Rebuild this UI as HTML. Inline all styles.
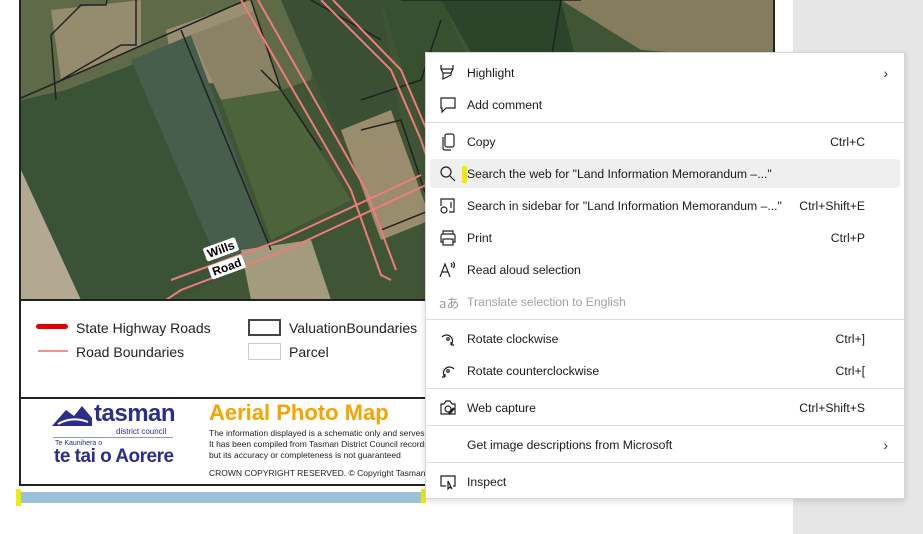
<!DOCTYPE html>
<html><head><meta charset="utf-8"><style>
*{margin:0;padding:0;box-sizing:border-box}
body{width:923px;height:534px;overflow:hidden;background:#fff;font-family:"Liberation Sans",Arial,sans-serif;position:relative}
.gray{position:absolute;left:793px;top:0;width:130px;height:534px;background:#e6e6e6}
.map{position:absolute;left:19px;top:0;width:756px;height:486px;border:2px solid #222;border-top:none;background:#fff;overflow:hidden}
.leg{position:absolute;font-size:14px;color:#222}
.menu{position:absolute;left:425px;top:52px;width:480px;height:447px;background:#fff;border:1px solid #d6d6d6;box-shadow:0 2px 6px rgba(0,0,0,.15);font-size:12.2px;color:#1a1a1a}
.it{position:absolute;left:0;width:478px;height:30px}
.it .t{position:absolute;left:41px;top:8px}
.it .k{position:absolute;right:39px;top:8px}
.it svg{position:absolute;left:13px;top:6px}
.sep{position:absolute;left:0;width:478px;height:1px;background:#dcdcdc}
.hl{position:absolute;left:4px;top:106px;width:470px;height:29px;background:#efefef;border-radius:4px}
.ch{position:absolute;right:16px;top:7px;font-size:14px;color:#333}
</style></head><body>
<div class="gray"></div>
<div class="map">
<svg width="756" height="300" viewBox="0 0 756 300" style="position:absolute;left:0;top:0">
<rect width="756" height="300" fill="#3f5535"/>
<polygon points="0,0 230,0 160,70 40,100 0,100" fill="#5e6a48"/>
<polygon points="30,10 120,0 120,45 40,80" fill="#958c6e"/>
<polygon points="145,30 230,0 250,80 155,85" fill="#9a8f72"/>
<polygon points="0,150 0,300 90,300 70,230 20,160" fill="#b3a891"/>
<polygon points="45,90 150,50 250,250 160,300 60,300 0,170 0,100" fill="#3a5236"/>
<polygon points="110,60 170,35 250,250 200,270" fill="#475e4c"/>
<polygon points="170,35 235,10 260,90 200,100" fill="#8a8265"/>
<polygon points="200,100 260,90 330,200 250,240" fill="#4d6339"/>
<polygon points="230,0 300,0 290,80 260,90" fill="#5f6a48"/>
<polygon points="260,0 360,0 380,120 320,140" fill="#3a4f33"/>
<polygon points="320,130 370,110 410,220 360,240" fill="#9a8d6e"/>
<polygon points="360,0 420,0 500,170 420,190" fill="#37502f"/>
<polygon points="420,0 540,0 560,80 500,140" fill="#2c452a"/>
<polygon points="540,0 756,0 756,60 620,50" fill="#857c5d"/>
<polygon points="400,180 440,170 480,260 420,280" fill="#4d6339"/>
<polygon points="220,250 290,240 310,300 230,300" fill="#a39b7d"/>
<g fill="none" stroke="#222" stroke-width="1.5">
<path d="M0,98 L225,0 M160,30 L250,250 M35,100 L30,35 L60,5 L85,5 L86,0 M40,80 L100,45 L115,45 L115,0 M230,0 L260,90 L300,150 M290,0 L360,40 M340,130 L380,120 L410,210 L360,230 M260,90 L240,70"/>
<path d="M380,0 L560,0 M420,20 L400,80 L340,100 M540,0 L530,60 L480,120" />
</g>
<g fill="none" stroke="#ef7c7c" stroke-width="2">
<path d="M220,0 L330,190 L360,275 L370,280 M237,0 L345,190 L375,270"/>
<path d="M300,0 L370,70 L400,140 L410,170 M312,0 L380,70 L410,140 L415,165"/>
<path d="M150,280 L260,240 L400,175 M145,300 L160,290 L265,250 L405,185"/>
</g>
<g transform="translate(185,258) rotate(-20)"><rect x="0" y="-10" width="34" height="14" fill="#fff" rx="2"/><text x="3" y="1" font-size="12" font-weight="bold" fill="#000">Wills</text></g>
<g transform="translate(190,276) rotate(-20)"><rect x="0" y="-10" width="36" height="14" fill="#fff" rx="2"/><text x="3" y="1" font-size="12" font-weight="bold" fill="#000">Road</text></g>
</svg>
<div style="position:absolute;left:0;top:299px;width:756px;height:2px;background:#222"></div>
<div style="position:absolute;left:0;top:397px;width:756px;height:2px;background:#222"></div>
<div style="position:absolute;left:15px;top:324px;width:32px;height:5px;background:#e40000;border-radius:3px"></div>
<div class="leg" style="left:55px;top:320px">State Highway Roads</div>
<div style="position:absolute;left:17px;top:350px;width:30px;height:2px;background:#f49090"></div>
<div class="leg" style="left:55px;top:344px">Road Boundaries</div>
<div style="position:absolute;left:227px;top:319px;width:33px;height:17px;border:2px solid #444"></div>
<div class="leg" style="left:268px;top:320px">ValuationBoundaries</div>
<div style="position:absolute;left:227px;top:343px;width:33px;height:17px;border:1px solid #ccc"></div>
<div class="leg" style="left:268px;top:344px">Parcel</div>
<svg width="40" height="26" style="position:absolute;left:31px;top:402px"><path d="M0,24 L14,8 L22,14 L30,4 L40,16 L40,24 Z" fill="#2b2e8c"/><path d="M6,22 Q20,14 36,20" stroke="#fff" stroke-width="2" fill="none"/></svg>
<div style="position:absolute;left:73px;top:400px;font-size:24px;font-weight:bold;color:#2b2e8c;letter-spacing:-0.5px">tasman</div>
<div style="position:absolute;left:95px;top:427px;font-size:8px;color:#2b2e8c">district council</div>
<div style="position:absolute;left:32px;top:437px;width:120px;height:1px;background:#99a"></div>
<div style="position:absolute;left:34px;top:440px;font-size:7px;color:#2b2e8c">Te Kaunihera o</div>
<div style="position:absolute;left:33px;top:446px;font-size:19px;font-weight:bold;color:#2b2e8c;letter-spacing:-0.5px">te tai o Aorere</div>
<div style="position:absolute;left:188px;top:400px;font-size:22px;font-weight:bold;color:#f5a400;white-space:nowrap">Aerial Photo Map</div>
<div style="position:absolute;left:188px;top:428px;font-size:8.5px;line-height:11px;color:#222;white-space:nowrap">The information displayed is a schematic only and serves as a guide only.<br>It has been compiled from Tasman District Council records<br>but its accuracy or completeness is not guaranteed</div>
<div style="position:absolute;left:188px;top:468px;font-size:8.5px;color:#222;white-space:nowrap">CROWN COPYRIGHT RESERVED. © Copyright Tasman District Council</div>
</div>
<div style="position:absolute;left:20px;top:492px;width:405px;height:11px;background:#9ac1da"></div>
<div style="position:absolute;left:16px;top:489px;width:5px;height:17px;background:#ee0"></div>
<div style="position:absolute;left:421px;top:489px;width:5px;height:14px;background:#ee0"></div>
<div class="menu">
<div class="hl"></div>
<div class="it" style="top:5px"><svg width="16" height="18" viewBox="0 0 16 18" fill="none" stroke="#222" stroke-width="1.2"><path d="M2,1 V5 H14 V1 M2,5 L4,9 H12 L14,5 M4,9 V15 L12,11 V9"/></svg><span class="t">Highlight</span><span class="ch">&#x203A;</span></div>
<div class="it" style="top:37px"><svg width="18" height="18" viewBox="0 0 18 18" fill="none" stroke="#222" stroke-width="1.2"><path d="M2,2 H16 V12 H7 L3,16 V12 H2 Z"/></svg><span class="t">Add comment</span></div>
<div class="sep" style="top:69px"></div>
<div class="it" style="top:74px"><svg width="18" height="18" viewBox="0 0 18 18" fill="none" stroke="#222" stroke-width="1.2"><rect x="6" y="1" width="9" height="13" rx="2"/><path d="M4,4 V15 Q4,17 6,17 H12"/></svg><span class="t">Copy</span><span class="k">Ctrl+C</span></div>
<div class="it" style="top:106px"><svg width="18" height="18" viewBox="0 0 18 18" fill="none" stroke="#222" stroke-width="1.2"><circle cx="7" cy="7" r="5"/><path d="M11,11 L16,16"/></svg><span style="position:absolute;left:36px;top:7px;width:5px;height:17px;background:#ee0"></span><span class="t">Search the web for "Land Information Memorandum –..."</span></div>
<div class="it" style="top:138px"><svg width="18" height="18" viewBox="0 0 18 18" fill="none" stroke="#222" stroke-width="1.2"><path d="M6,2 H15 V15 H10 M2,9 V2 H6 M12,5 V11"/><circle cx="5" cy="13" r="3"/></svg><span class="t">Search in sidebar for "Land Information Memorandum –..."</span><span class="k">Ctrl+Shift+E</span></div>
<div class="it" style="top:170px"><svg width="18" height="18" viewBox="0 0 18 18" fill="none" stroke="#222" stroke-width="1.2"><path d="M4,5 V2 H14 V5 M4,13 H2 V7 Q2,5 4,5 H14 Q16,5 16,7 V13 H14"/><rect x="4" y="10" width="10" height="6"/></svg><span class="t">Print</span><span class="k">Ctrl+P</span></div>
<div class="it" style="top:202px"><svg width="18" height="18" viewBox="0 0 18 18" fill="none" stroke="#222" stroke-width="1.2"><path d="M1,16 L6,3 L11,16 M3,11 H9 M12,2 Q14,4 12,6 M14,1 Q17,4 14,7"/></svg><span class="t">Read aloud selection</span></div>
<div class="it" style="top:234px;color:#a0a0a0"><span style="position:absolute;left:13px;top:6px;font-size:13px;font-family:'Noto Sans CJK JP',sans-serif;color:#999">aあ</span><span class="t">Translate selection to English</span></div>
<div class="sep" style="top:266px"></div>
<div class="it" style="top:271px"><svg width="18" height="18" viewBox="0 0 18 18" fill="none" stroke="#222" stroke-width="1.2"><path d="M3,7 A6,6 0 1 1 12,15 M12,15 V12 M12,15 H15"/><circle cx="9" cy="9" r="1.3"/></svg><span class="t">Rotate clockwise</span><span class="k">Ctrl+]</span></div>
<div class="it" style="top:303px"><svg width="18" height="18" viewBox="0 0 18 18" fill="none" stroke="#222" stroke-width="1.2"><path d="M15,7 A6,6 0 1 0 6,15 M6,15 V12 M6,15 H3"/><circle cx="9" cy="9" r="1.3"/></svg><span class="t">Rotate counterclockwise</span><span class="k">Ctrl+[</span></div>
<div class="sep" style="top:335px"></div>
<div class="it" style="top:340px"><svg width="18" height="18" viewBox="0 0 18 18" fill="none" stroke="#222" stroke-width="1.2"><path d="M2,5 H5 L7,2 H11 L13,5 H16 V15 H2 Z"/><circle cx="9" cy="10" r="3"/><path d="M10,15 L15,9" stroke-width="2.5"/></svg><span class="t">Web capture</span><span class="k">Ctrl+Shift+S</span></div>
<div class="sep" style="top:372px"></div>
<div class="it" style="top:377px"><span class="t">Get image descriptions from Microsoft</span><span class="ch">&#x203A;</span></div>
<div class="sep" style="top:409px"></div>
<div class="it" style="top:414px"><svg width="18" height="18" viewBox="0 0 18 18" fill="none" stroke="#222" stroke-width="1.2"><path d="M7,13 H2 V3 H16 V13 H14"/><path d="M9,8 L9,16 L11,14 L13,16 Z"/></svg><span class="t">Inspect</span></div>
</div>
</body></html>
